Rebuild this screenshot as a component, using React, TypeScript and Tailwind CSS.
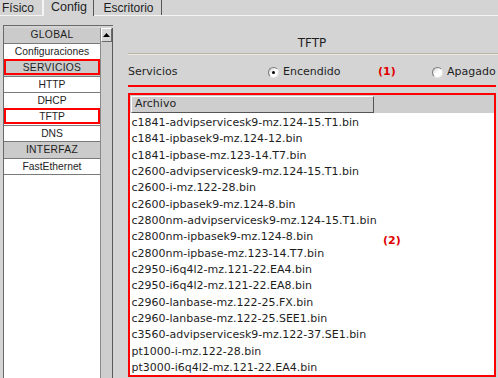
const files = [
  'c1841-advipservicesk9-mz.124-15.T1.bin',
  'c1841-ipbasek9-mz.124-12.bin',
  'c1841-ipbase-mz.123-14.T7.bin',
  'c2600-advipservicesk9-mz.124-15.T1.bin',
  'c2600-i-mz.122-28.bin',
  'c2600-ipbasek9-mz.124-8.bin',
  'c2800nm-advipservicesk9-mz.124-15.T1.bin',
  'c2800nm-ipbasek9-mz.124-8.bin',
  'c2800nm-ipbase-mz.123-14.T7.bin',
  'c2950-i6q4l2-mz.121-22.EA4.bin',
  'c2950-i6q4l2-mz.121-22.EA8.bin',
  'c2960-lanbase-mz.122-25.FX.bin',
  'c2960-lanbase-mz.122-25.SEE1.bin',
  'c3560-advipservicesk9-mz.122-37.SE1.bin',
  'pt1000-i-mz.122-28.bin',
  'pt3000-i6q4l2-mz.121-22.EA4.bin',
];

type NavItem = { label: string; header?: boolean; marked?: boolean };

const nav: NavItem[] = [
  { label: 'GLOBAL', header: true },
  { label: 'Configuraciones' },
  { label: 'SERVICIOS', header: true, marked: true },
  { label: 'HTTP' },
  { label: 'DHCP' },
  { label: 'TFTP', marked: true },
  { label: 'DNS' },
  { label: 'INTERFAZ', header: true },
  { label: 'FastEthernet' },
];

function Tabs() {
  return (
    <div className="flex h-[16px] items-end border-b border-[#f4f4f4] font-['Liberation_Sans',sans-serif] text-[12px] text-[#1e1e1e]">
      <div className="flex h-[15px] w-[42px] items-center pl-[2px]">Físico</div>
      <div className="-mb-px flex h-[17px] w-[52px] items-center justify-center border-l-2 border-r border-l-[#f4f4f4] border-r-[#555] bg-[#d4d4d4] pl-[1px] text-[12.5px]">
        Config
      </div>
      <div className="flex h-[15px] w-[68px] items-center justify-center border-r border-[#555] pl-[2px]">
        Escritorio
      </div>
    </div>
  );
}

function Sidebar() {
  return (
    <div className="mt-[9px] ml-[3px] flex w-[110px] border-t border-l border-[#6a6a6a] pt-[1.5px] font-['Liberation_Sans',sans-serif] text-[10.3px] text-[#1e1e1e]">
      <div className="flex-1 border-r border-[#8a8a8a] bg-white">
        {nav.map((item) => (
          <div
            key={item.label}
            className={`relative flex h-[16.4px] items-center justify-center border-b border-[#7a7a7a] ${
              item.header ? 'bg-[#cbcbcb] tracking-[0.3px]' : 'bg-white'
            }`}
          >
            {item.label}
            {item.marked && (
              <span className="absolute inset-x-0 -top-[1px] bottom-[0.5px] border-2 border-[#ff0000]" />
            )}
          </div>
        ))}
      </div>
      <div className="w-[12px] border-r border-[#5a5a5a] bg-[#cecece]">
        <div className="flex h-[14px] w-[11px] items-center justify-center border-t border-l border-b border-r border-t-white border-l-white border-b-[#6a6a6a] border-r-[#6a6a6a] bg-[#d6d6d6]">
          <svg width="7" height="4" viewBox="0 0 7 4">
            <path d="M0 4 L3.5 0 L7 4 Z" fill="#000" />
          </svg>
        </div>
      </div>
    </div>
  );
}

function Radio({ checked }: { checked?: boolean }) {
  return (
    <span className="relative inline-block h-[11px] w-[11px] rounded-full border border-t-[#7d7d7d] border-l-[#7d7d7d] border-r-[#e6e6e6] border-b-[#e6e6e6] bg-gradient-to-br from-[#d0d0d0] via-white to-white">
      {checked && (
        <span className="absolute left-[3px] top-[3px] h-[3px] w-[3px] rounded-full bg-black" />
      )}
    </span>
  );
}

function Main() {
  return (
    <div className="ml-[15px] flex flex-1 flex-col pr-[2px] font-['DejaVu_Sans',sans-serif] text-[11px] text-[#1e1e1e]">
      <div className="mt-[19px] h-[16px] text-center text-[12px] leading-[16px]">TFTP</div>
      <div className="mt-[2px] -mr-[2px] h-[2px] border-t border-b border-t-[#b9b5aa] border-b-[#ece9e1]" />
      <div className="mt-[9px] flex h-[16px] items-center">
        <span className="w-[140px]">Servicios</span>
        <span className="flex w-[110px] items-center gap-[4px]">
          <Radio checked />
          Encendido
        </span>
        <span className="w-[54px] font-bold text-[#e00000]">(1)</span>
        <span className="flex items-center gap-[4px]">
          <Radio />
          Apagado
        </span>
      </div>
      <div className="mt-[5px] h-[2px] bg-[#ff0000]" />
      <div className="mt-[6px] h-[284px] overflow-hidden border-2 border-[#ff0000] bg-white">
        <div className="flex h-[18px] bg-[#cecece] pt-px pl-px">
          <div className="flex h-[17px] w-[243px] items-center border border-t-white border-l-white border-r-[#555] border-b-[#555] pl-[3px]">
            Archivo
          </div>
        </div>
        <div className="relative pt-[2px] pl-[1.5px]">
          {files.map((f) => (
            <div key={f} className="flex h-[16.35px] items-center whitespace-nowrap">
              {f}
            </div>
          ))}
          <span className="absolute top-[120px] left-[253px] font-bold text-[#e00000]">(2)</span>
        </div>
      </div>
    </div>
  );
}

export default function App() {
  return (
    <div className="h-[378px] w-[498px] overflow-hidden bg-[#d4d4d4]">
      <Tabs />
      <div className="flex h-[362px]">
        <Sidebar />
        <Main />
      </div>
    </div>
  );
}
